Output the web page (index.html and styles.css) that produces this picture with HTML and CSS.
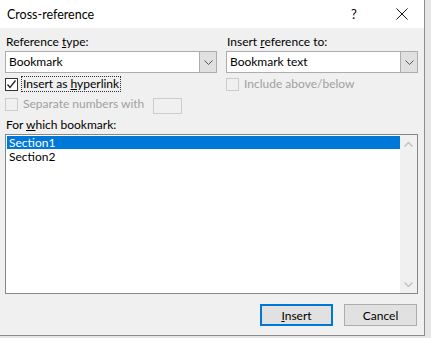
FILE: index.html
```html
<!DOCTYPE html>
<html lang="en">
<head>
  <meta charset="UTF-8" />
  <title>Cross-reference</title>
  <link rel="stylesheet" href="styles.css">
</head>
<body>

  <div class="dialog">
    <div class="titlebar">
      <span class="title">Cross-reference</span>
      <span class="help">?</span>
      <span class="close">
        <svg width="12" height="12" viewBox="0 0 12 12"><path d="M0.5 0.5 L11.5 11.5 M11.5 0.5 L0.5 11.5" stroke="#111" stroke-width="1"/></svg>
      </span>
    </div>

    <div class="content">
      <div class="columns">
        <div class="col col-left">
          <div class="label">Reference <u>t</u>ype:</div>
          <div class="combo">
            <span class="combo-text">Bookmark</span>
            <span class="combo-arrow"><svg width="9" height="5" viewBox="0 0 9 5"><path d="M0.5 0.5 L4.5 4.5 L8.5 0.5" fill="none" stroke="#555" stroke-width="1"/></svg></span>
          </div>
          <div class="check-row">
            <span class="checkbox checked"><svg width="11" height="11" viewBox="0 0 11 11"><path d="M1.5 5.5 L4 8.5 L9.5 1.5" fill="none" stroke="#222" stroke-width="1.3"/></svg></span>
            <span class="check-label focused">Insert as <u>h</u>yperlink</span>
          </div>
          <div class="check-row disabled">
            <span class="checkbox"></span>
            <span class="check-label">Separate numbers with</span>
            <span class="small-input"></span>
          </div>
        </div>
        <div class="col col-right">
          <div class="label">Insert <u>r</u>eference to:</div>
          <div class="combo">
            <span class="combo-text">Bookmark text</span>
            <span class="combo-arrow"><svg width="9" height="5" viewBox="0 0 9 5"><path d="M0.5 0.5 L4.5 4.5 L8.5 0.5" fill="none" stroke="#555" stroke-width="1"/></svg></span>
          </div>
          <div class="check-row disabled">
            <span class="checkbox"></span>
            <span class="check-label">Include above/below</span>
          </div>
        </div>
      </div>

      <div class="label list-label">For <u>w</u>hich bookmark:</div>
      <div class="listbox">
        <ul class="items">
          <li class="selected">Section1</li>
          <li>Section2</li>
        </ul>
        <div class="scrollbar">
          <svg width="9" height="5" viewBox="0 0 9 5"><path d="M0.5 4.5 L4.5 0.5 L8.5 4.5" fill="none" stroke="#c2c2c2" stroke-width="1.5"/></svg>
          <svg width="9" height="5" viewBox="0 0 9 5"><path d="M0.5 0.5 L4.5 4.5 L8.5 0.5" fill="none" stroke="#c2c2c2" stroke-width="1.5"/></svg>
        </div>
      </div>

      <div class="buttons">
        <button class="btn default"><u>I</u>nsert</button>
        <button class="btn">Cancel</button>
      </div>
    </div>
  </div>

</body>
</html>
```

FILE: styles.css
```css
body {
  margin: 0;
  padding: 0;
  font-family: Lato, "Noto Sans", sans-serif;
  font-size: 12px;
  color: #000;
  background-color: #e6e6e6;
  height: 338px;
  overflow: hidden;
}

.dialog {
  width: 424px;
  height: 335px;
  background-color: #f0f0f0;
  border-right: 1px solid #8c8c8c;
  border-bottom: 1px solid #8c8c8c;
  display: flex;
  flex-direction: column;
}

.titlebar {
  height: 28px;
  background-color: #fff;
  display: flex;
  align-items: center;
  padding-left: 7px;
}

.title {
  flex: 1;
  font-size: 12.5px;
}

.help {
  font-size: 13px;
  width: 10px;
  margin-right: 35px;
}

.close {
  width: 12px;
  height: 12px;
  margin-right: 16px;
  display: flex;
}

.content {
  flex: 1;
  padding: 0 6px 0 5px;
  display: flex;
  flex-direction: column;
}

.columns {
  display: flex;
  gap: 9px;
}

.col-left {
  width: 212px;
}

.col-right {
  width: 192px;
}

.label {
  height: 15px;
  line-height: 15px;
  margin-top: 6px;
  margin-bottom: 2px;
  padding-left: 1px;
  overflow: hidden;
}

.combo {
  height: 22px;
  box-sizing: border-box;
  border: 1px solid #adadad;
  background-color: #fff;
  display: flex;
  align-items: stretch;
}

.combo-text {
  flex: 1;
  line-height: 20px;
  padding-left: 3px;
}

.combo-arrow {
  width: 16px;
  background-color: #e0e0e0;
  border-left: 1px solid #adadad;
  display: flex;
  align-items: center;
  justify-content: center;
}

.check-row {
  display: flex;
  align-items: center;
  height: 16px;
  margin-top: 3px;
}

.check-row + .check-row {
  margin-top: 4px;
}

.check-row.disabled {
  color: #a0a0a0;
}

.checkbox {
  width: 13px;
  height: 13px;
  box-sizing: border-box;
  border: 1px solid #333;
  background-color: #fff;
  display: flex;
  align-items: center;
  justify-content: center;
}

.disabled .checkbox {
  border-color: #cccccc;
  background-color: #f0f0f0;
}

.check-label {
  margin-left: 3px;
  padding: 0 1px;
  line-height: 14px;
  border: 1px dotted transparent;
}

.check-label.focused {
  border-color: #333;
}

.small-input {
  width: 29px;
  height: 16px;
  margin-left: 7px;
  margin-top: 3px;
  box-sizing: border-box;
  border: 1px solid #cccccc;
  background-color: #f0f0f0;
}

.list-label {
  margin-top: 5px;
}

.listbox {
  height: 160px;
  box-sizing: border-box;
  border: 1px solid #828790;
  background-color: #fff;
  display: flex;
}

.items {
  flex: 1;
  list-style: none;
  margin: 0;
  padding: 1px 0 0 1px;
}

.items li {
  height: 14px;
  line-height: 14px;
  padding-left: 2px;
  overflow: hidden;
}

.items li.selected {
  height: 13px;
  line-height: 13px;
  margin-bottom: 1px;
  background-color: #0078d7;
  color: #fff;
}

.scrollbar {
  width: 17px;
  background-color: #f0f0f0;
  display: flex;
  flex-direction: column;
  justify-content: space-between;
  align-items: center;
  padding: 7px 0 6px;
  box-sizing: border-box;
}

.buttons {
  display: flex;
  justify-content: flex-end;
  gap: 11px;
  margin-top: 10px;
  padding-right: 1px;
}

.btn {
  width: 73px;
  height: 22px;
  box-sizing: border-box;
  font-family: inherit;
  font-size: 12px;
  background-color: #e1e1e1;
  border: 1px solid #adadad;
  color: #000;
  padding: 0;
}

.btn.default {
  border: 2px solid #0078d7;
}
```
